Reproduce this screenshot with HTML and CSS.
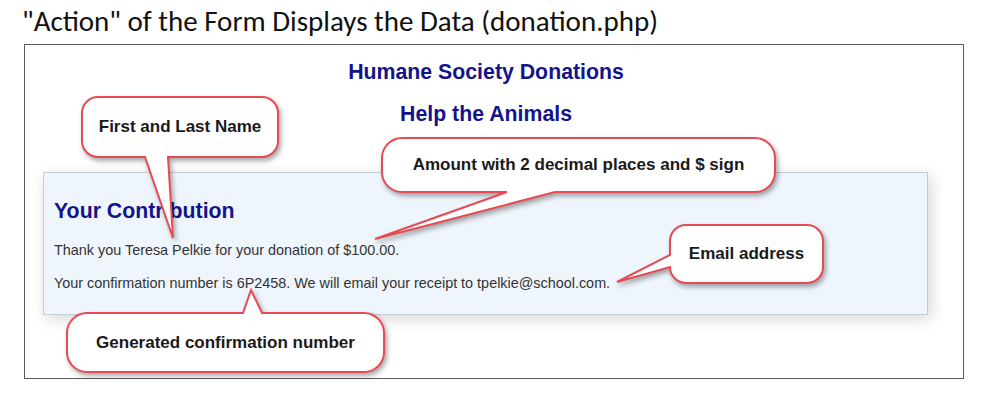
FILE: index.html
```html
<!DOCTYPE html>
<html lang="en">
<head>
<meta charset="utf-8">
<title>Action of the Form</title>
<link rel="stylesheet" href="styles.css">
</head>
<body>
<div class="page">
  <h1 class="title">"Action" of the Form Displays the Data (donation.php)</h1>
  <div class="frame">
    <h2 class="site-head">Humane Society Donations</h2>
    <h3 class="site-sub">Help the Animals</h3>
    <div class="panel">
      <h2 class="panel-head">Your Contribution</h2>
      <p class="line first">Thank you Teresa Pelkie for your donation of $100.00.</p>
      <p class="line second">Your confirmation number is 6P2458. We will email your receipt to tpelkie@school.com.</p>
    </div>
  </div>

  <div class="callout c-name">
    <svg class="bubble" width="196" height="60" viewBox="0 0 196 60">
      <path d="M16 0 H180 A16 16 0 0 1 196 16 V44 A16 16 0 0 1 180 60 H86 L91 141 L63 60 H16 A16 16 0 0 1 0 44 V16 A16 16 0 0 1 16 0 Z"/>
    </svg>
    <span class="label">First and Last Name</span>
  </div>

  <div class="callout c-amount">
    <svg class="bubble" width="393" height="54" viewBox="0 0 393 54">
      <path d="M20 0 H373 A20 20 0 0 1 393 20 V34 A20 20 0 0 1 373 54 H173 L-7 101 L125 54 H20 A20 20 0 0 1 0 34 V20 A20 20 0 0 1 20 0 Z"/>
    </svg>
    <span class="label">Amount with 2 decimal places and $ sign</span>
  </div>

  <div class="callout c-email">
    <svg class="bubble" width="153" height="58" viewBox="0 0 153 58">
      <path d="M16 0 H137 A16 16 0 0 1 153 16 V42 A16 16 0 0 1 137 58 H16 A16 16 0 0 1 0 42 L-53 57 L0 30 V16 A16 16 0 0 1 16 0 Z"/>
    </svg>
    <span class="label">Email address</span>
  </div>

  <div class="callout c-conf">
    <svg class="bubble" width="317" height="59" viewBox="0 0 317 59">
      <path d="M20 0 H176 L184 -23 L195 0 H297 A20 20 0 0 1 317 20 V39 A20 20 0 0 1 297 59 H20 A20 20 0 0 1 0 39 V20 A20 20 0 0 1 20 0 Z"/>
    </svg>
    <span class="label">Generated confirmation number</span>
  </div>
</div>
</body>
</html>
```

FILE: styles.css
```css
html, body {
  margin: 0;
  padding: 0;
  background: #ffffff;
}

.page {
  position: relative;
  width: 986px;
  height: 416px;
  overflow: hidden;
}

.title {
  margin: 0;
  padding: 4px 0 0 22px;
  height: 40px;
  box-sizing: border-box;
  font-family: "Carlito", "Lato", "Liberation Sans", sans-serif;
  font-weight: 400;
  font-size: 29px;
  line-height: 34px;
  color: #111111;
}

.frame {
  margin-left: 24px;
  margin-top: 4px;
  width: 940px;
  height: 335px;
  box-sizing: border-box;
  border: 1px solid #5a5a5a;
  padding-top: 15px;
  font-family: "Liberation Sans", Arial, sans-serif;
}

.site-head,
.site-sub,
.panel-head {
  margin: 0;
  font-size: 21.3px;
  line-height: 24px;
  font-weight: 700;
  color: #14148a;
}

.site-head,
.site-sub {
  text-align: center;
  padding-right: 16px;
}

.site-sub {
  margin-top: 18px;
}

.panel {
  margin: 46px 0 0 18px;
  width: 885px;
  height: 143px;
  box-sizing: border-box;
  border: 1px solid #c9ccd0;
  background: #eef5fd;
  box-shadow: 3px 4px 14px rgba(0, 0, 0, 0.16);
  padding: 26px 10px 0 10px;
}

.line {
  margin: 0;
  font-size: 14.4px;
  line-height: 16px;
  color: #333333;
}

.line.first {
  margin-top: 19px;
}

.line.second {
  margin-top: 17px;
}

.callout {
  position: absolute;
  display: flex;
  align-items: center;
  justify-content: center;
}

.bubble {
  position: absolute;
  left: 0;
  top: 0;
  overflow: visible;
  filter: drop-shadow(2px 3px 2.5px rgba(0, 0, 0, 0.35));
}

.bubble path {
  fill: #ffffff;
  stroke: #e84a52;
  stroke-width: 2;
  stroke-linejoin: miter;
}

.label {
  position: relative;
  font-family: "Liberation Sans", Arial, sans-serif;
  font-weight: 700;
  font-size: 17px;
  color: #1a1a1a;
  white-space: nowrap;
}

.c-name {
  left: 82px;
  top: 97px;
  width: 196px;
  height: 60px;
}

.c-amount {
  left: 382px;
  top: 138px;
  width: 393px;
  height: 54px;
}

.c-email {
  left: 670px;
  top: 225px;
  width: 153px;
  height: 58px;
}

.c-conf {
  left: 67px;
  top: 313px;
  width: 317px;
  height: 59px;
}
```
